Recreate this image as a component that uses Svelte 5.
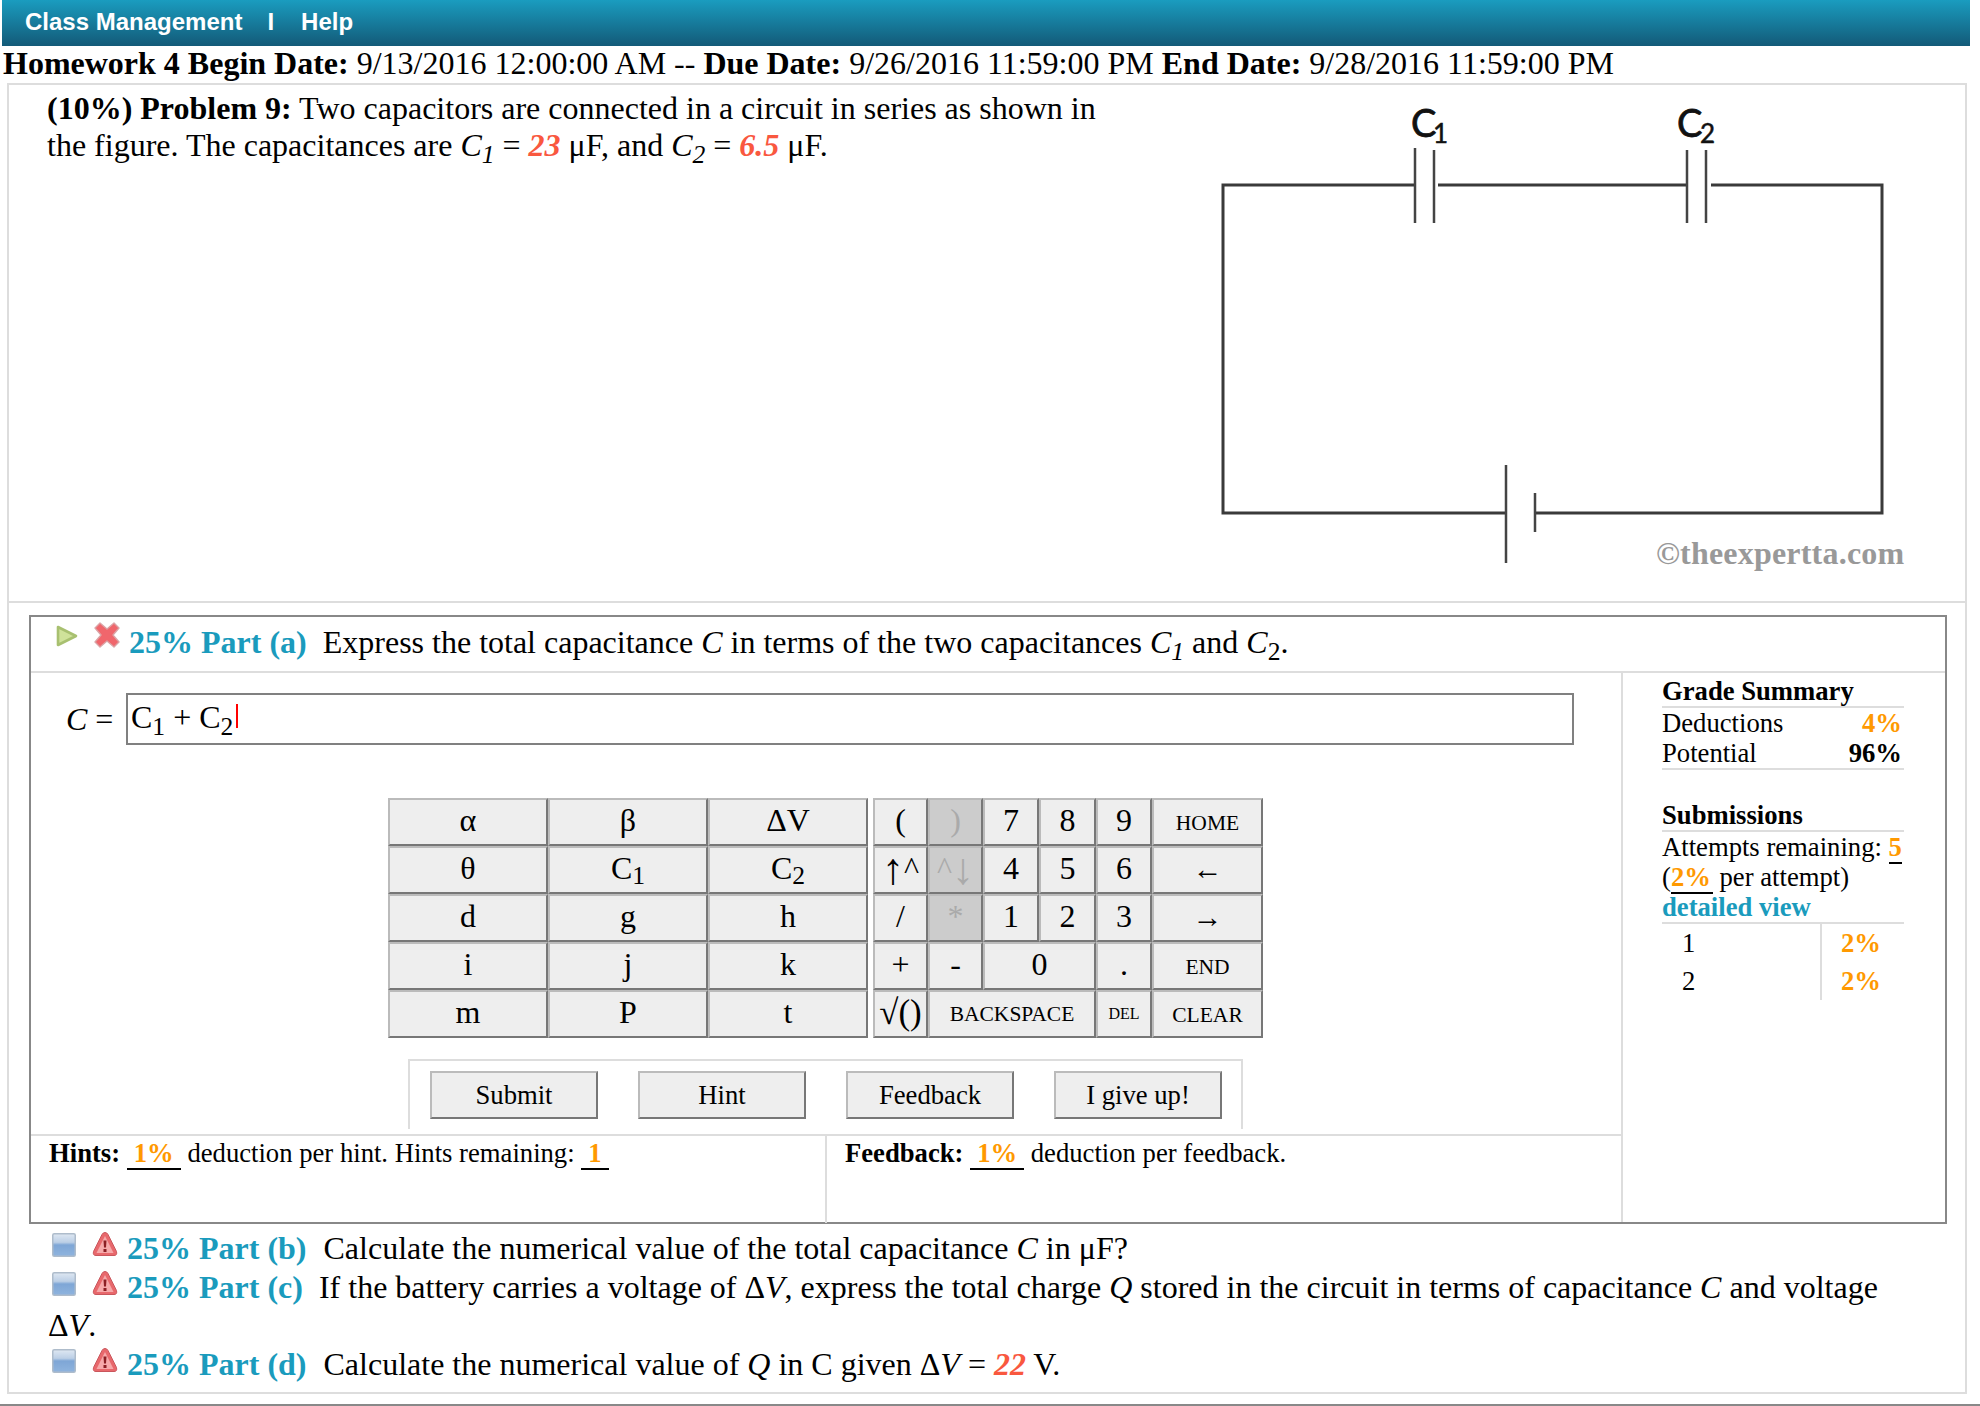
<script>
  // keypad layout: text, optional span, optional size class, disabled flag
  const greek = [
    [{ t: 'α' }, { t: 'β' }, { t: 'ΔV' }],
    [{ t: 'θ' }, { t: 'C', sub: '1' }, { t: 'C', sub: '2' }],
    [{ t: 'd' }, { t: 'g' }, { t: 'h' }],
    [{ t: 'i' }, { t: 'j' }, { t: 'k' }],
    [{ t: 'm' }, { t: 'P' }, { t: 't' }]
  ].flat();

  const pad = [
    { t: '(' }, { t: ')', off: true }, { t: '7' }, { t: '8' }, { t: '9' }, { t: 'HOME', cls: 'word' },
    { t: '^', before: '↑' }, { t: '^', after: '↓', off: true }, { t: '4' }, { t: '5' }, { t: '6' }, { t: '←', cls: 'arrow' },
    { t: '/' }, { t: '*', off: true }, { t: '1' }, { t: '2' }, { t: '3' }, { t: '→', cls: 'arrow' },
    { t: '+' }, { t: '-' }, { t: '0', span: 2 }, { t: '.' }, { t: 'END', cls: 'word' },
    { t: '√()', cls: 'root' }, { t: 'BACKSPACE', span: 3, cls: 'word flat' }, { t: 'DEL', cls: 'tiny' }, { t: 'CLEAR', cls: 'word' }
  ];

  const actions = ['Submit', 'Hint', 'Feedback', 'I give up!'];
</script>

{#snippet minimize()}
  <svg class="icon box" viewBox="0 0 24 24" aria-hidden="true">
    <defs>
      <linearGradient id="blueBox" x1="0" y1="0" x2="0" y2="1">
        <stop offset="0" stop-color="#dfe8f2" />
        <stop offset="0.38" stop-color="#bccfe6" />
        <stop offset="0.5" stop-color="#7ea6d6" />
        <stop offset="1" stop-color="#8fb4de" />
      </linearGradient>
    </defs>
    <rect x="0.75" y="0.75" width="22.5" height="22.5" rx="1.5" fill="url(#blueBox)" stroke="#aebccb" stroke-width="1.5" />
  </svg>
{/snippet}

{#snippet warning()}
  <svg class="icon warn" viewBox="0 0 26 26" aria-hidden="true">
    <path d="M13 1.5 Q15 1.5 16 3.5 L24.5 20.5 Q25.5 24.5 22 24.5 L4 24.5 Q0.5 24.5 1.5 20.5 L10 3.5 Q11 1.5 13 1.5 Z" fill="#e8686c" stroke="#c9565c" stroke-width="1" stroke-linejoin="round" />
    <path d="M13 5 L21.5 22 L4.5 22 Z" fill="#f6a9aa" />
    <path d="M11.5 9.5 h3 l-0.5 7 h-2 z M11.5 18 h3 v3 h-3 z" fill="#8c1f24" />
  </svg>
{/snippet}

<div class="page">
  <div class="topbar">
    <span>Class Management</span>
    <span class="sep">I</span>
    <span>Help</span>
  </div>

  <div class="hw-line">
    <b>Homework 4 Begin Date:</b> 9/13/2016 12:00:00 AM -- <b>Due Date:</b> 9/26/2016 11:59:00 PM <b>End Date:</b> 9/28/2016 11:59:00 PM
  </div>

  <div class="panel">
    <section class="problem">
      <p class="statement">
        <b>(10%) Problem 9:</b> Two capacitors are connected in a circuit in series as shown in the figure. The capacitances are <i>C<sub>1</sub></i> = <b class="given">23</b> μF, and <i>C<sub>2</sub></i> = <b class="given">6.5</b> μF.
      </p>
      <svg class="figure" viewBox="1150 85 815 516" aria-hidden="true">
        <g stroke="#3a3a3a" stroke-width="3" fill="none">
          <path d="M1415 185 H1223 V513 H1506" />
          <path d="M1438 185 H1687" />
          <path d="M1711 185 H1882 V513 H1535" />
        </g>
        <g stroke="#444" stroke-width="2.5">
          <path d="M1415 148 V223 M1434 150 V223 M1687 150 V223 M1706 150 V223" />
          <path d="M1506 465 V563 M1535 493 V532" />
        </g>
        <text class="cap" x="1411" y="137">C</text>
        <text class="cap-sub" x="1433" y="143">1</text>
        <text class="cap" x="1677" y="137">C</text>
        <text class="cap-sub" x="1700" y="143">2</text>
        <text class="mark" x="1656" y="564">©theexpertta.com</text>
      </svg>
    </section>

    <section class="part-box">
      <div class="part-head">
        <svg class="icon play" viewBox="0 0 22 22" aria-hidden="true">
          <path d="M2 2 L20 11 L2 20 Z" fill="#cfe29a" stroke="#a8c070" stroke-width="2.6" stroke-linejoin="round" />
        </svg>
        <svg class="icon cross" viewBox="0 0 26 26" aria-hidden="true">
          <path d="M6 1 L13 7 L20 1 L25 6 L19 13 L25 20 L20 25 L13 19 L6 25 L1 20 L7 13 L1 6 Z" fill="#f0666c" stroke="#dba3a6" stroke-width="1.4" stroke-linejoin="round" />
        </svg>
        <span class="part-label">25% Part (a)</span>
        <span class="part-text">Express the total capacitance <i>C</i> in terms of the two capacitances <i>C<sub>1</sub></i> and <i>C</i><sub>2</sub>.</span>
      </div>

      <div class="part-body">
        <div class="work">
          <div class="answer">
            <span class="answer-label"><i>C</i> =</span>
            <div class="answer-input">C<sub>1</sub> + C<sub>2</sub><span class="caret"></span></div>
          </div>

          <div class="keypad">
            <div class="keys greek">
              {#each greek as key}
                <div class="key">{key.t}{#if key.sub}<sub>{key.sub}</sub>{/if}</div>
              {/each}
            </div>
            <div class="keys numeric">
              {#each pad as key}
                <div class="key {key.cls ?? ''}" class:off={key.off} style:grid-column={key.span ? `span ${key.span}` : null}>
                  {#if key.before}<span class="tall">{key.before}</span>{/if}{key.t}{#if key.after}<span class="tall">{key.after}</span>{/if}
                </div>
              {/each}
            </div>
          </div>

          <div class="actions">
            {#each actions as label}
              <button type="button" class="action">{label}</button>
            {/each}
          </div>

          <div class="notes">
            <div class="note hints">
              <b>Hints:</b> <span class="blank">1%</span> deduction per hint. Hints remaining: <span class="blank">1</span>
            </div>
            <div class="note">
              <b>Feedback:</b> <span class="blank">1%</span> deduction per feedback.
            </div>
          </div>
        </div>

        <aside class="summary">
          <div class="sum-title">Grade Summary</div>
          <div class="sum-row"><span>Deductions</span><b class="orange">4%</b></div>
          <div class="sum-row last"><span>Potential</span><b>96%</b></div>

          <div class="sum-title second">Submissions</div>
          <div class="attempts">Attempts remaining: <b class="orange under">5</b></div>
          <div class="attempts">(<b class="orange under pct">2%</b> per attempt)</div>
          <div class="detail">detailed view</div>
          <div class="tries">
            <span class="try-n">1</span><b class="orange try-v">2%</b>
            <span class="try-n">2</span><b class="orange try-v">2%</b>
          </div>
        </aside>
      </div>
    </section>

    <section class="parts">
      <div class="part-line">
        {@render minimize()}{@render warning()}<span class="part-label">25% Part (b)</span>
        <span class="gap">Calculate the numerical value of the total capacitance <i>C</i> in μF?</span>
      </div>
      <div class="part-line">
        {@render minimize()}{@render warning()}<span class="part-label">25% Part (c)</span>
        <span class="gap tight">If the battery carries a voltage of Δ<i>V</i>, express the total charge <i>Q</i> stored in the circuit in terms of capacitance <i>C</i> and voltage Δ<i>V</i>.</span>
      </div>
      <div class="part-line">
        {@render minimize()}{@render warning()}<span class="part-label">25% Part (d)</span>
        <span class="gap">Calculate the numerical value of <i>Q</i> in C given Δ<i>V</i> = <b class="given">22</b> V.</span>
      </div>
    </section>
  </div>

  <div class="page-end"></div>
</div>

<style>
  :global(body) {
    margin: 0;
    background: #fff;
  }

  .page {
    width: 1980px;
    height: 1406px;
    overflow: hidden;
    font-family: "Liberation Serif", serif;
    color: #000;
    font-size: 32px;
  }

  .topbar {
    display: flex;
    align-items: center;
    gap: 25px;
    box-sizing: border-box;
    margin-left: 2px;
    width: 1968px;
    height: 46px;
    padding: 0 0 2px 23px;
    background: linear-gradient(#1a9cbf, #135a78);
    color: #fff;
    font-family: "Liberation Sans", sans-serif;
    font-weight: 700;
    font-size: 24px;
  }

  .sep {
    margin-right: 2px;
  }

  .hw-line {
    height: 37px;
    padding-left: 3px;
    line-height: 34px;
    white-space: nowrap;
  }

  .panel {
    box-sizing: border-box;
    margin-left: 7px;
    width: 1960px;
    height: 1311px;
    border: 2px solid #ddd;
  }

  .problem {
    display: flex;
    justify-content: space-between;
    height: 516px;
    border-bottom: 2px solid #ddd;
  }

  .statement {
    width: 1065px;
    margin: 5px 0 0 38px;
    line-height: 36.5px;
  }

  sub {
    font-size: 0.8em;
    line-height: 0;
    vertical-align: -0.28em;
  }

  .given {
    color: #f9583f;
    font-style: italic;
  }

  .figure {
    width: 815px;
    height: 516px;
    flex: none;
  }

  .cap {
    font-family: Lato, sans-serif;
    font-size: 38px;
    fill: #111;
    stroke: #111;
    stroke-width: 0.8;
  }

  .cap-sub {
    font-family: Lato, sans-serif;
    font-size: 26px;
    fill: #111;
    stroke: #111;
    stroke-width: 0.5;
  }

  .mark {
    font-family: "Liberation Serif", serif;
    font-weight: 700;
    font-size: 32px;
    letter-spacing: 0.2px;
    fill: #999;
  }

  .part-box {
    box-sizing: border-box;
    margin: 12px 0 0 20px;
    width: 1918px;
    height: 609px;
    border: 2px solid #888;
  }

  .part-head {
    display: flex;
    align-items: flex-start;
    box-sizing: border-box;
    height: 56px;
    border-bottom: 2px solid #ddd;
    line-height: 50px;
    white-space: nowrap;
  }

  .icon {
    flex: none;
    filter: blur(0.4px);
  }

  .play {
    width: 22px;
    height: 22px;
    margin: 8px 0 0 25px;
  }

  .cross {
    width: 26px;
    height: 26px;
    margin: 5px 9px 0 16px;
  }

  .part-label {
    color: #1a9bbd;
    font-weight: 700;
  }

  .part-text {
    margin-left: 16px;
  }

  .part-body {
    display: flex;
    height: 549px;
  }

  .work {
    box-sizing: border-box;
    width: 1592px;
    border-right: 2px solid #ddd;
  }

  .answer {
    display: flex;
    align-items: center;
    padding: 20px 0 0 35px;
  }

  .answer-label {
    width: 60px;
    white-space: nowrap;
  }

  .answer-input {
    box-sizing: border-box;
    width: 1448px;
    height: 52px;
    padding-left: 3px;
    border: 2px solid #808080;
    line-height: 44px;
  }

  .caret {
    display: inline-block;
    width: 2px;
    height: 24px;
    margin-left: 3px;
    background: #f00;
  }

  .keypad {
    display: flex;
    gap: 5px;
    margin: 53px 0 0 357px;
  }

  .keys {
    display: grid;
    grid-auto-rows: 48px;
  }

  .greek {
    grid-template-columns: repeat(3, 160px);
  }

  .numeric {
    grid-template-columns: 55px 55px 56px 57px 56px 111px;
  }

  .key {
    display: flex;
    align-items: center;
    justify-content: center;
    box-sizing: border-box;
    padding-bottom: 3px;
    background: #eee;
    border: 2px solid;
    border-color: #bbb #777 #777 #bbb;
    white-space: nowrap;
  }

  .key sub {
    align-self: flex-end;
    vertical-align: baseline;
    line-height: 26px;
  }

  .key.off {
    background: #ccc;
    color: #aaa;
  }

  .tall {
    font-size: 44px;
    line-height: 0;
    margin-top: 3px;
  }

  .word {
    font-size: 21.5px;
    padding: 2px 0 0;
  }

  .word.flat {
    padding: 0;
  }

  .tiny {
    font-size: 16px;
    padding: 0;
  }

  .arrow {
    font-size: 30px;
    padding: 0 0 2px;
  }

  .root {
    font-size: 35px;
    padding-bottom: 2px;
  }

  .actions {
    display: flex;
    gap: 40px;
    box-sizing: border-box;
    margin: 21px 0 0 377px;
    width: 835px;
    height: 70px;
    padding: 10px 0 0 20px;
    border: solid #ddd;
    border-width: 2px 2px 0;
  }

  .action {
    box-sizing: border-box;
    width: 168px;
    height: 48px;
    padding: 0;
    background: #eee;
    border: 2px solid;
    border-color: #bbb #777 #777 #bbb;
    font: inherit;
    font-size: 26.67px;
    color: #000;
  }

  .notes {
    display: flex;
    box-sizing: border-box;
    margin-top: 5px;
    height: 89px;
    border-top: 2px solid #ddd;
    font-size: 26.67px;
  }

  .note {
    flex: 1;
    box-sizing: border-box;
    padding: 1px 0 0 18px;
    line-height: 32px;
    white-space: nowrap;
  }

  .note.hints {
    flex: none;
    width: 794px;
  }

  .note + .note {
    border-left: 2px solid #ddd;
  }

  .blank {
    display: inline-block;
    padding: 0 7px;
    line-height: 30px;
    border-bottom: 2px solid #000;
    color: #ff9900;
    font-weight: 700;
  }

  .summary {
    box-sizing: border-box;
    width: 322px;
    padding: 3px 41px 0 39px;
    font-size: 26.67px;
    line-height: 30px;
  }

  .sum-title {
    font-weight: 700;
    border-bottom: 2px solid #ddd;
  }

  .sum-title.second {
    margin-top: 30px;
  }

  .sum-row {
    display: flex;
    justify-content: space-between;
    padding-right: 2px;
  }

  .sum-row.last {
    border-bottom: 2px solid #ddd;
  }

  .orange {
    color: #ff9900;
  }

  .attempts {
    white-space: nowrap;
  }

  .under {
    border-bottom: 2px solid #000;
  }

  .pct {
    padding-right: 2px;
  }

  .detail {
    color: #1a9bbd;
    font-weight: 700;
    border-bottom: 2px solid #ddd;
  }

  .tries {
    display: grid;
    grid-template-columns: 160px 80px;
    grid-auto-rows: 38px;
    line-height: 38px;
  }

  .try-n {
    padding-left: 20px;
    border-right: 2px solid #ddd;
  }

  .try-v {
    padding-left: 19px;
  }

  .parts {
    padding: 5px 0 0 39px;
    line-height: 38.5px;
    width: 1860px;
  }

  .part-line .icon {
    vertical-align: 2px;
  }

  .box {
    width: 24px;
    height: 24px;
    margin: 0 16px 0 4px;
  }

  .warn {
    width: 26px;
    height: 26px;
    margin-right: 9px;
  }

  .gap {
    margin-left: 9px;
  }

  .gap.tight {
    margin-left: 8px;
  }

  .page-end {
    margin-top: 10px;
    height: 2px;
    background: #888;
  }
</style>
